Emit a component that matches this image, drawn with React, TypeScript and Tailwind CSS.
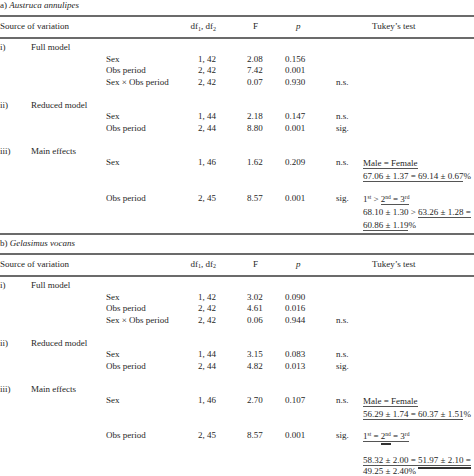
import type { ReactNode } from 'react'

const GRID = 'grid grid-cols-[31px_75px_80px_30px_31px_38px_51px_27px_1fr]'

function Rule({ className = '' }: { className?: string }) {
  return <div className={`h-[2px] bg-[#6b6b6b] ${className}`} />
}

function Title({ letter, name, className = '' }: { letter: string; name: string; className?: string }) {
  return (
    <div className={`h-[11.5px] leading-[11.5px] ${className}`}>
      {letter}) <span className="italic">{name}</span>
    </div>
  )
}

function Header({ className = '' }: { className?: string }) {
  return (
    <div className={`${GRID} h-[11.5px] leading-[11.5px] ${className}`}>
      <span className="col-span-3">Source of variation</span>
      <span className="whitespace-nowrap text-right">
        df<sub className="text-[6px]">1</sub>, df<sub className="text-[6px]">2</sub>
      </span>
      <span />
      <span className="pl-[6px]">F</span>
      <span className="pl-[11px] italic">p</span>
      <span />
      <span className="pl-[9px]">Tukey’s test</span>
    </div>
  )
}

function GroupRow({ num, label }: { num: string; label: string }) {
  return (
    <div className={`${GRID} h-[11.5px] leading-[11.5px]`}>
      <span>{num}</span>
      <span className="col-span-2">{label}</span>
    </div>
  )
}

type DataRowProps = {
  eff: string
  df: string
  F: string
  p: string
  sig?: string
  tukey?: ReactNode
}

function DataRow({ eff, df, F, p, sig, tukey }: DataRowProps) {
  return (
    <div className={`${GRID} items-start leading-[11.5px]`}>
      <span />
      <span />
      <span className="whitespace-nowrap">{eff}</span>
      <span className="text-right">{df}</span>
      <span />
      <span>{F}</span>
      <span>{p}</span>
      <span>{sig}</span>
      <div className="whitespace-nowrap leading-[13px]">{tukey}</div>
    </div>
  )
}

function Blank() {
  return <div className="h-[11.5px]" />
}

function Ord({ n, s }: { n: string; s: string }) {
  return (
    <>
      {n}
      <sup className="-top-[3px] text-[5.5px]">{s}</sup>
    </>
  )
}

// underline drawn as a border so it sits right under the text line
function U({ children }: { children: ReactNode }) {
  return <span className="inline-block border-b-[0.8px] border-[#555] leading-[10px]">{children}</span>
}

function DoubleU({ children }: { children: ReactNode }) {
  return (
    <span className="relative">
      {children}
      <span className="absolute bottom-[-3.5px] left-0 right-0 h-[1.3px] bg-[#333]" />
    </span>
  )
}

export default function App() {
  return (
    <div className="h-[476px] w-[474px] overflow-hidden bg-white font-['Liberation_Serif',serif] text-[9px] text-[#262626]">
      {/* a) */}
      <Title letter="a" name="Austruca annulipes" />
      <Rule className="mt-[3.5px]" />
      <Header className="mt-[4.25px]" />
      <Rule className="mt-[4.25px]" />
      <div className="mt-[3.25px]">
        <GroupRow num="i)" label="Full model" />
        <DataRow eff="Sex" df="1, 42" F="2.08" p="0.156" />
        <DataRow eff="Obs period" df="2, 42" F="7.42" p="0.001" />
        <DataRow eff="Sex × Obs period" df="2, 42" F="0.07" p="0.930" sig="n.s." />
        <Blank />
        <GroupRow num="ii)" label="Reduced model" />
        <DataRow eff="Sex" df="1, 44" F="2.18" p="0.147" sig="n.s." />
        <DataRow eff="Obs period" df="2, 44" F="8.80" p="0.001" sig="sig." />
        <Blank />
        <GroupRow num="iii)" label="Main effects" />
        <DataRow
          eff="Sex"
          df="1, 46"
          F="1.62"
          p="0.209"
          sig="n.s."
          tukey={
            <>
              <div><U>Male = Female</U></div>
              <div><U>67.06 ± 1.37 = 69.14 ± 0.67</U>%</div>
            </>
          }
        />
        <div className="h-[10px]" />
        <DataRow
          eff="Obs period"
          df="2, 45"
          F="8.57"
          p="0.001"
          sig="sig."
          tukey={
            <>
              <div>
                <Ord n="1" s="st" /> &gt; <U><Ord n="2" s="nd" /> = <Ord n="3" s="rd" /></U>
              </div>
              <div>
                68.10 ± 1.30 &gt; <U>63.26 ± 1.28 =</U>
              </div>
              <div><U>60.86 ± 1.19</U>%</div>
            </>
          }
        />
      </div>
      <Rule className="mt-[0.75px]" />

      {/* b) */}
      <Title letter="b" name="Gelasimus vocans" className="mt-[2.75px]" />
      <Rule className="mt-[3.75px]" />
      <Header className="mt-[3.75px]" />
      <Rule className="mt-[4.75px]" />
      <div className="mt-[3.25px]">
        <GroupRow num="i)" label="Full model" />
        <DataRow eff="Sex" df="1, 42" F="3.02" p="0.090" />
        <DataRow eff="Obs period" df="2, 42" F="4.61" p="0.016" />
        <DataRow eff="Sex × Obs period" df="2, 42" F="0.06" p="0.944" sig="n.s." />
        <Blank />
        <GroupRow num="ii)" label="Reduced model" />
        <DataRow eff="Sex" df="1, 44" F="3.15" p="0.083" sig="n.s." />
        <DataRow eff="Obs period" df="2, 44" F="4.82" p="0.013" sig="sig." />
        <Blank />
        <GroupRow num="iii)" label="Main effects" />
        <DataRow
          eff="Sex"
          df="1, 46"
          F="2.70"
          p="0.107"
          sig="n.s."
          tukey={
            <>
              <div><U>Male = Female</U></div>
              <div><U>56.29 ± 1.74 = 60.37 ± 1.51</U>%</div>
            </>
          }
        />
        <div className="h-[9px]" />
        <DataRow
          eff="Obs period"
          df="2, 45"
          F="8.57"
          p="0.001"
          sig="sig."
          tukey={
            <>
              <div>
                <U>
                  <Ord n="1" s="st" /> = <DoubleU><Ord n="2" s="nd" /></DoubleU> = <Ord n="3" s="rd" />
                </U>
              </div>
              <div className="h-[11px]" />
              <div className="leading-[12px]">
                <U>
                  58.32 ± 2.00 = <DoubleU>51.97 ± 2.10 =</DoubleU>
                </U>
              </div>
              <div className="leading-[11px]">49.25 ± 2.40%</div>
            </>
          }
        />
      </div>
    </div>
  )
}
